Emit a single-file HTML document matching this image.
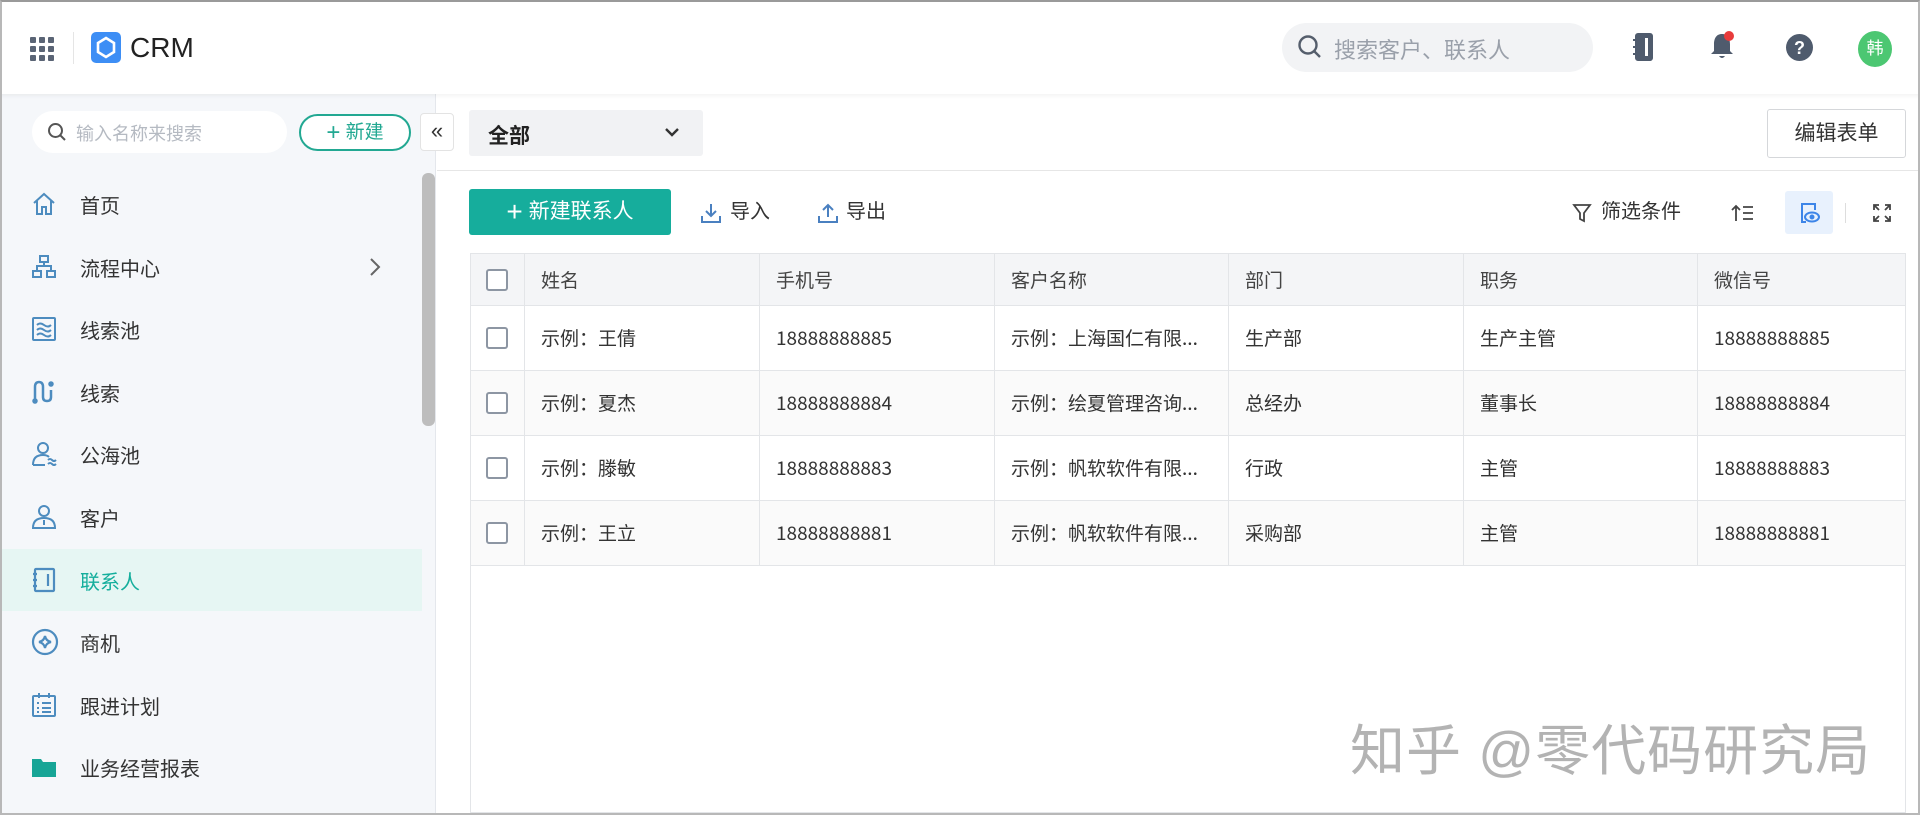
<!DOCTYPE html>
<html><head><meta charset="utf-8"><style>
*{box-sizing:border-box;margin:0;padding:0}
body{width:1920px;height:815px;overflow:hidden;background:#fff;font-family:"Liberation Sans","Noto Sans CJK SC",sans-serif;color:#333;position:relative}
.frame{position:absolute;inset:0;border:2px solid #b8b8b8;border-top-color:#9a9a9a;pointer-events:none;z-index:10}
.hdr{position:absolute;left:0;top:0;width:1920px;height:94px;background:#fff;box-shadow:0 2px 4px rgba(0,0,0,.05);z-index:2}
.abs{position:absolute}
.side{position:absolute;left:0;top:94px;width:436px;height:721px;background:#f5f7fa;border-right:1px solid #e4e7ec}
.mi{position:absolute;left:0;width:422px;height:62px;display:flex;align-items:center}
.mi svg{position:absolute;left:31px}
.mi span{position:absolute;left:80px;font-size:20px;color:#333}
.tb{position:absolute;font-size:20px;color:#333;display:flex;align-items:center;line-height:26px}
table{border-collapse:collapse;position:absolute;left:470px;top:253px;width:1435px;table-layout:fixed}
td{border:1px solid #e3e5e8;height:65px;font-size:19px;padding-left:16px;color:#333;white-space:nowrap;overflow:hidden;font-family:"Noto Sans CJK SC",sans-serif;line-height:24px;vertical-align:middle}
tr.h td{height:52px;background:#f4f5f7;color:#444}
tr:nth-child(odd):not(.h) td{background:#fafafa}
.cb{width:22px;height:22px;border:2px solid #8d96a3;border-radius:3px;display:block;background:#fff}
</style></head><body>
<div class="hdr">
 <svg class="abs" style="left:30px;top:37px" width="24" height="24" viewBox="0 0 24 24" fill="#5a6475"><rect x="0" y="0" width="6" height="6" rx="1"/><rect x="9" y="0" width="6" height="6" rx="1"/><rect x="18" y="0" width="6" height="6" rx="1"/><rect x="0" y="9" width="6" height="6" rx="1"/><rect x="9" y="9" width="6" height="6" rx="1"/><rect x="18" y="9" width="6" height="6" rx="1"/><rect x="0" y="18" width="6" height="6" rx="1"/><rect x="9" y="18" width="6" height="6" rx="1"/><rect x="18" y="18" width="6" height="6" rx="1"/></svg>
 <div class="abs" style="left:73px;top:32px;width:1px;height:32px;background:#e5e5e5"></div>
 <svg class="abs" style="left:91px;top:32px" width="30" height="31" viewBox="0 0 30 31"><rect width="30" height="31" rx="5" fill="#3d8ef5"/><path d="M15 6 L23 11 L23 20 L15 25 L7 20 L7 11 Z" fill="none" stroke="#fff" stroke-width="2.6"/><circle cx="15" cy="15.5" r="4" fill="#3d8ef5"/></svg>
 <div class="abs" style="left:130px;top:32px;font-size:28px;color:#222">CRM</div>
 <div class="abs" style="left:1282px;top:23px;width:311px;height:49px;border-radius:25px;background:#f2f3f5"></div>
 <svg class="abs" style="left:1297px;top:34px" width="26" height="26" viewBox="0 0 26 26" fill="none" stroke="#555e6c" stroke-width="2.4"><circle cx="11" cy="11" r="8.5"/><path d="M17 17 L23 23"/></svg>
 <div class="abs" style="left:1334px;top:33px;font-size:22px;color:#9aa0aa">搜索客户、联系人</div>
 <svg class="abs" style="left:1633px;top:33px" width="20" height="28" viewBox="0 0 20 28"><rect x="2" y="0" width="18" height="28" rx="3" fill="#4f5b6d"/><rect x="12" y="5" width="3" height="18" fill="#fff"/><rect x="0" y="6" width="4" height="2" fill="#4f5b6d"/><rect x="0" y="13" width="4" height="2" fill="#4f5b6d"/><rect x="0" y="20" width="4" height="2" fill="#4f5b6d"/></svg>
 <svg class="abs" style="left:1709px;top:30px" width="28" height="32" viewBox="0 0 28 32"><path d="M13 4 C7 4 5 9 5 14 L5 21 L2 24 L24 24 L21 21 L21 14 C21 9 19 4 13 4Z" fill="#4f5b6d"/><path d="M10 26 Q13 30 16 26Z" fill="#4f5b6d"/><circle cx="20" cy="6" r="5" fill="#e83b3b"/></svg>
 <svg class="abs" style="left:1786px;top:34px" width="27" height="27" viewBox="0 0 27 27"><circle cx="13.5" cy="13.5" r="13.5" fill="#4f5b6d"/><text x="13.5" y="20" font-size="18" font-weight="bold" text-anchor="middle" fill="#fff" font-family="Liberation Sans">?</text></svg>
 <div class="abs" style="left:1858px;top:31px;width:34px;height:36px;border-radius:50%;background:#4cc772;color:#fff;font-size:17px;text-align:center;line-height:36px">韩</div>
</div>

<div class="side">
 <div class="abs" style="left:32px;top:17px;width:255px;height:42px;border-radius:21px;background:#fff"></div>
 <svg class="abs" style="left:47px;top:28px" width="20" height="20" viewBox="0 0 20 20" fill="none" stroke="#555" stroke-width="2"><circle cx="8.5" cy="8.5" r="6.5"/><path d="M13 13 L18 18"/></svg>
 <div class="abs" style="left:76px;top:26px;font-size:18px;color:#b5bac2">输入名称来搜索</div>
 <div class="abs" style="left:299px;top:20px;width:112px;height:37px;border:2px solid #22a892;border-radius:19px;color:#22a892;font-size:19px;line-height:33px;text-align:center;background:#fff"><span style="font-size:24px;vertical-align:-2px">+</span> 新建</div>
 <div class="abs" style="left:420px;top:19px;width:34px;height:38px;border:1px solid #e3e3e3;border-radius:4px;background:#fff;text-align:center;line-height:34px;font-size:22px;color:#333">«</div>
 <div class="abs" style="left:422px;top:79px;width:13px;height:253px;border-radius:6px;background:#bdbdbd"></div>
 <div class="mi" style="top:79px"><svg width="26" height="26" viewBox="0 0 26 26" fill="none" stroke="#4d8cbf" stroke-width="2"><path d="M3 12 L13 3 L23 12 M6 10 V23 H11 V16 H15 V23 H20 V10"/></svg><span>首页</span></div>
 <div class="mi" style="top:142px"><svg width="26" height="26" viewBox="0 0 26 26" fill="none" stroke="#4d8cbf" stroke-width="2"><rect x="9" y="2" width="8" height="6"/><rect x="2" y="17" width="8" height="6"/><rect x="16" y="17" width="8" height="6"/><path d="M13 8 V12 M6 17 V12 H20 V17"/></svg><span>流程中心</span><svg style="left:368px" width="14" height="22" viewBox="0 0 14 22" fill="none" stroke="#666" stroke-width="2"><path d="M3 3 L11 11 L3 19"/></svg></div>
 <div class="mi" style="top:204px"><svg width="26" height="26" viewBox="0 0 26 26" fill="none" stroke="#4d8cbf" stroke-width="2"><rect x="2" y="2" width="22" height="22" rx="1"/><path d="M6 9 Q9 6 13 9 T20 9 M6 14 Q9 11 13 14 T20 14 M6 19 Q9 16 13 19 T20 19"/></svg><span>线索池</span></div>
 <div class="mi" style="top:267px"><svg width="26" height="26" viewBox="0 0 26 26" fill="none" stroke="#4d8cbf" stroke-width="2.5"><path d="M4 21 V8 Q4 3 8 3 Q12 3 12 8 V18 Q12 22 16 22 Q20 22 20 18 V11"/><circle cx="20" cy="5" r="1.5" fill="#4d8cbf"/><circle cx="4" cy="22" r="1.5" fill="#4d8cbf"/></svg><span>线索</span></div>
 <div class="mi" style="top:329px"><svg width="28" height="26" viewBox="0 0 28 26" fill="none" stroke="#4d8cbf" stroke-width="2"><circle cx="12" cy="7" r="5"/><path d="M2 24 Q2 14 12 14 Q16 14 18 16 M2 24 H14 M17 19 Q19 17 21 19 T25 19 M17 23 Q19 21 21 23 T25 23"/></svg><span>公海池</span></div>
 <div class="mi" style="top:392px"><svg width="26" height="26" viewBox="0 0 26 26" fill="none" stroke="#4d8cbf" stroke-width="2"><circle cx="13" cy="7" r="5"/><path d="M2 24 Q2 14 13 14 Q24 14 24 24 Z M13 16 V21"/></svg><span>客户</span></div>
 <div class="abs" style="left:0;top:455px;width:422px;height:62px;background:#e6f6f3"></div>
 <div class="mi" style="top:455px"><svg width="26" height="26" viewBox="0 0 26 26" fill="none" stroke="#4d8cbf" stroke-width="2.2"><rect x="4" y="2" width="19" height="22" rx="1"/><path d="M2 7 H6 M2 13 H6 M2 19 H6 M17 7 V19"/></svg><span style="color:#14ae9c">联系人</span></div>
 <div class="mi" style="top:517px"><svg width="28" height="28" viewBox="0 0 28 28" fill="none" stroke="#4d8cbf" stroke-width="2.2"><circle cx="14" cy="14" r="12"/><path d="M14 8 Q15 13 20 14 Q15 15 14 20 Q13 15 8 14 Q13 13 14 8Z"/></svg><span>商机</span></div>
 <div class="mi" style="top:580px"><svg width="26" height="26" viewBox="0 0 26 26" fill="none" stroke="#4d8cbf" stroke-width="2"><rect x="2" y="4" width="22" height="20" rx="1"/><path d="M8 1 V6 M18 1 V6 M6 11 H8 M11 11 H20 M6 16 H8 M11 16 H20 M6 20 H8 M11 20 H20"/></svg><span>跟进计划</span></div>
 <div class="mi" style="top:642px"><svg width="26" height="24" viewBox="0 0 26 24"><path d="M1 4 H10 L12 7 H25 V22 H1 Z" fill="#17a596"/></svg><span>业务经营报表</span></div>
</div>

<div class="abs" style="left:437px;top:170px;width:1483px;height:1px;background:#e6e6e6"></div>
<div class="abs" style="left:469px;top:110px;width:234px;height:46px;background:#f1f2f4;border-radius:3px"></div>
<div class="abs" style="left:488px;top:120px;font-size:21px;font-weight:bold;color:#222">全部</div>
<svg class="abs" style="left:664px;top:126px" width="16" height="12" viewBox="0 0 16 12" fill="none" stroke="#333" stroke-width="2.4"><path d="M2 3 L8 9 L14 3"/></svg>
<div class="abs" style="left:1767px;top:109px;width:139px;height:49px;border:1px solid #d5d7da;border-radius:3px;font-size:21px;color:#333;text-align:center;line-height:47px">编辑表单</div>

<div class="abs" style="left:469px;top:189px;width:202px;height:46px;background:#16ad9c;border-radius:3px;color:#fff;font-size:21px;line-height:46px;text-align:center"><span style="font-size:28px;vertical-align:-3px">+</span> 新建联系人</div>
<svg class="abs" style="left:700px;top:202px" width="22" height="22" viewBox="0 0 22 22" fill="none" stroke="#4a80c0" stroke-width="2"><path d="M11 2 V14 M6 9 L11 14 L16 9 M2 14 V20 H20 V14"/></svg>
<div class="tb" style="left:730px;top:199px">导入</div>
<svg class="abs" style="left:817px;top:202px" width="22" height="22" viewBox="0 0 22 22" fill="none" stroke="#4a80c0" stroke-width="2"><path d="M11 15 V3 M6 8 L11 3 L16 8 M2 14 V20 H20 V14"/></svg>
<div class="tb" style="left:846px;top:199px">导出</div>
<svg class="abs" style="left:1572px;top:203px" width="20" height="20" viewBox="0 0 20 20" fill="none" stroke="#444" stroke-width="1.8"><path d="M2 2 H18 L12 10 V18 L8 16 V10 Z"/></svg>
<div class="tb" style="left:1601px;top:199px">筛选条件</div>
<svg class="abs" style="left:1731px;top:203px" width="24" height="20" viewBox="0 0 24 20" fill="none" stroke="#444" stroke-width="1.8"><path d="M5 18 V3 M1 7 L5 3 L9 7 M12 4 H22 M12 10 H22 M12 16 H22"/></svg>
<div class="abs" style="left:1785px;top:191px;width:48px;height:43px;background:#e8f1fd;border-radius:3px"></div>
<svg class="abs" style="left:1798px;top:202px" width="22" height="22" viewBox="0 0 22 22" fill="none" stroke="#3d85e8" stroke-width="2"><path d="M8 20 H4 V2 H17 V8"/><ellipse cx="14" cy="15" rx="7" ry="4.5"/><circle cx="14" cy="15" r="1.5" fill="#3d85e8"/></svg>
<div class="abs" style="left:1845px;top:203px;width:1px;height:20px;background:#ddd"></div>
<svg class="abs" style="left:1872px;top:203px" width="20" height="20" viewBox="0 0 20 20" fill="none" stroke="#444" stroke-width="1.8"><path d="M2 7 V2 H7 M2 2 L7 7 M13 2 H18 V7 M18 2 L13 7 M2 13 V18 H7 M2 18 L7 13 M13 18 H18 V13 M18 18 L13 13"/></svg>

<div class="abs" style="left:470px;top:253px;width:1436px;height:560px;border:1px solid #e3e5e8"></div>
<table>
<colgroup><col style="width:54px"><col style="width:235px"><col style="width:235px"><col style="width:234px"><col style="width:235px"><col style="width:234px"><col style="width:208px"></colgroup>
<tr class="h"><td style="padding-left:15px"><span class="cb"></span></td><td>姓名</td><td>手机号</td><td>客户名称</td><td>部门</td><td>职务</td><td>微信号</td></tr>
<tr><td style="padding-left:15px"><span class="cb"></span></td><td>示例：王倩</td><td>18888888885</td><td>示例：上海国仁有限...</td><td>生产部</td><td>生产主管</td><td>18888888885</td></tr>
<tr><td style="padding-left:15px"><span class="cb"></span></td><td>示例：夏杰</td><td>18888888884</td><td>示例：绘夏管理咨询...</td><td>总经办</td><td>董事长</td><td>18888888884</td></tr>
<tr><td style="padding-left:15px"><span class="cb"></span></td><td>示例：滕敏</td><td>18888888883</td><td>示例：帆软软件有限...</td><td>行政</td><td>主管</td><td>18888888883</td></tr>
<tr><td style="padding-left:15px"><span class="cb"></span></td><td>示例：王立</td><td>18888888881</td><td>示例：帆软软件有限...</td><td>采购部</td><td>主管</td><td>18888888881</td></tr>
</table>

<div class="abs" style="left:1350px;top:706px;font-size:55px;color:#b3b3b3;white-space:nowrap;letter-spacing:1px">知乎 @零代码研究局</div>
<div class="frame"></div>
</body></html>
